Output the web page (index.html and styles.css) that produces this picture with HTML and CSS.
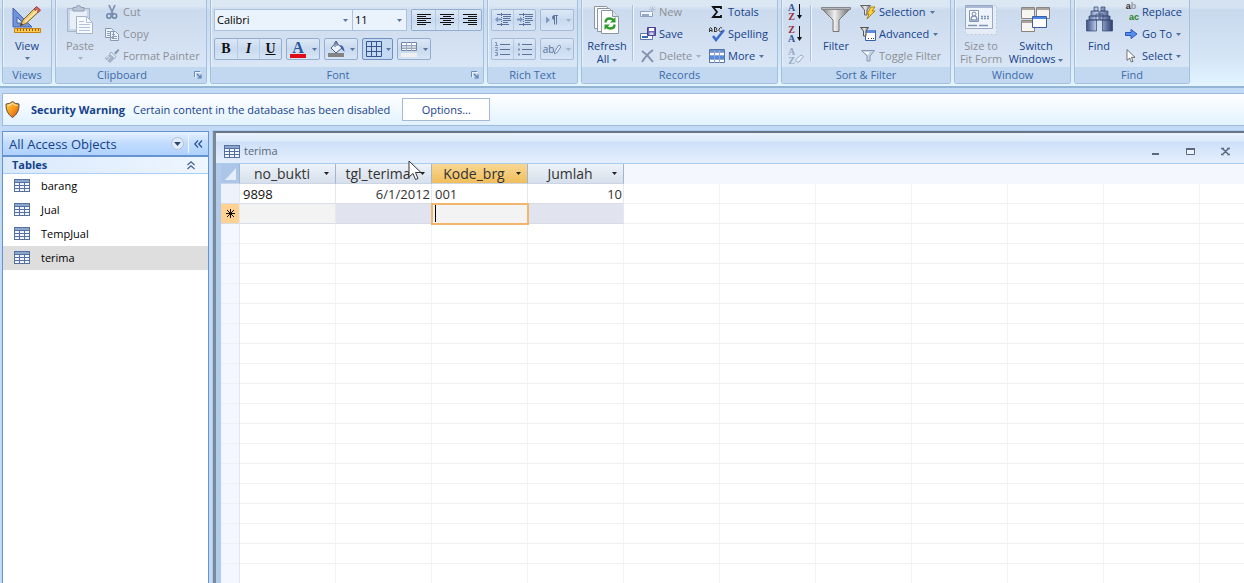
FILE: index.html
```html
<!DOCTYPE html>
<html lang="en">
<head>
<meta charset="utf-8">
<title>terima</title>
<link rel="stylesheet" href="styles.css">
</head>
<body>
<svg class="defs" aria-hidden="true">
  <defs>
    <linearGradient id="gFunnel" x1="0" x2="1"><stop offset="0" stop-color="#777"/><stop offset=".45" stop-color="#eee"/><stop offset="1" stop-color="#666"/></linearGradient>
    <linearGradient id="gShield" x1="0" y1="0" x2="1" y2="1"><stop offset="0" stop-color="#ffd24a"/><stop offset=".5" stop-color="#f99a1c"/><stop offset="1" stop-color="#d8500a"/></linearGradient>
    <linearGradient id="gBino" x1="0" x2="1"><stop offset="0" stop-color="#3c5186"/><stop offset=".4" stop-color="#c3d2f2"/><stop offset="1" stop-color="#2c3d70"/></linearGradient>
    <symbol id="caret" viewBox="0 0 5 3"><path d="M0 0h5L2.500 3z" fill="currentColor"/></symbol>
    <symbol id="table" viewBox="0 0 16 13"><path d="M0 0h16v13H0z" fill="#55709f"/><path d="M1 1h14v2H1z" fill="#8da6d0"/><path d="M1 4h4v2H1zM6 4h4v2H6zM11 4h4v2h-4zM1 7h4v2H1zM6 7h4v2H6zM11 7h4v2h-4zM1 10h4v2H1zM6 10h4v2H6zM11 10h4v2h-4z" fill="#f0f5ff"/></symbol>
    <symbol id="launch" viewBox="0 0 8 8"><path d="M.5 6V.5H6" fill="none" stroke="#6b8bb8"/><path d="M3 3l3 3M7 3.500V7H3.500" fill="none" stroke="#5878a8" stroke-width="1.200"/><path d="M1.500 7V1.500H7" fill="none" stroke="#fff" stroke-width=".7"/></symbol>
    <symbol id="pointer" viewBox="0 0 14 21"><path d="M1 1v16l4-3.500 2.500 6 2.500-1-2.500-6H13z" fill="#fff" stroke="#333"/></symbol>
  </defs>
</svg>

<header class="ribbon">
  <section class="group g-views">
    <div class="body">
      <button class="big"><svg width="30" height="28" viewBox="0 0 30 28"><path d="M1 2v19h19z" fill="#7394d8" stroke="#4465ad"/><path d="M5 11v6h6z" fill="#dce7fa" stroke="#4465ad"/><path d="M2.500 22.500h26v4h-26z" fill="#ffc94b" stroke="#c98416"/><path d="M5.500 23v2m3-2v2m3-2v2m3-2v2m3-2v2m3-2v2m3-2v2m3-2v2" stroke="#8b5a10"/><path d="M8 20l3-6L24 1l4 3.500L14 17.500z" fill="#f3c76b" stroke="#856432"/><path d="M22 3l2.500-2.500 4 3.500L26 6.500z" fill="#d9635c" stroke="#8e4542"/><path d="M13 16L25 4.500" stroke="#fff1b8" stroke-width="1.500"/><path d="M8 20l1.500-3 1.500 1.500z" fill="#333"/></svg><span>View</span><svg class="caret"><use href="#caret"/></svg></button>
    </div>
    <h2>Views</h2>
  </section>

  <section class="group g-clip">
    <div class="body">
      <button class="big" disabled><svg width="28" height="30" viewBox="0 0 28 30"><path d="M1.500 3.500h22v23h-22z" fill="#c9d6e8" stroke="#a5b3c9"/><path d="M4 6h17v18H4z" fill="#e8eff8"/><path d="M7 6V2.500h3Q10 .5 12.500.5T15 2.500h3V6z" fill="#b9c6d9" stroke="#8e9db5"/><path d="M10.500 11.500h10l6 6v11h-16z" fill="#f6f9fe" stroke="#a5b3c9"/><path d="M20.500 11.500v6h6M13 16.500h5m-5 3h11m-11 3h11m-11 3h11" fill="none" stroke="#b3c2d8"/></svg><span>Paste</span><svg class="caret"><use href="#caret"/></svg></button>
      <div class="stack">
        <button class="small" disabled><svg width="16" height="16" viewBox="0 0 16 16"><path d="M5 1l4 9M11 1L7 10" stroke="#7f92b3" stroke-width="1.800"/><circle cx="5" cy="12" r="2.200" fill="none" stroke="#6f84aa" stroke-width="1.500"/><circle cx="10.500" cy="12" r="2.200" fill="none" stroke="#6f84aa" stroke-width="1.500"/></svg>Cut</button>
        <button class="small" disabled><svg width="16" height="16" viewBox="0 0 16 16"><path d="M1.500 2.500h6l2 2v7h-8zM6.500 5.500h5l3 3v6h-8z" fill="#eef3fb" stroke="#8798b5"/><path d="M3 5.500h3m-3 2h3m-3 2h3M8 8.500h3m-3 2h5m-5 2h5" stroke="#8fa0bc"/></svg>Copy</button>
        <button class="small" disabled><svg width="16" height="16" viewBox="0 0 16 16"><path d="M10 5l4-4 1.500 1L12 6.500z" fill="#8798b5"/><path d="M7 4l5 4.500-1.500 2L5.500 6z" fill="#dfe7f2" stroke="#8798b5" stroke-width=".7"/><path d="M5.500 6.500l5 4L6 15 .5 10z" fill="#a2b1c9"/><path d="M2 10l3-2m-1.500 4l3-3" stroke="#e3eaf4"/></svg>Format Painter</button>
      </div>
    </div>
    <h2>Clipboard</h2>
    <button class="launcher" aria-label="Clipboard options"><svg width="8" height="8"><use href="#launch"/></svg></button>
  </section>

  <section class="group g-font">
    <div class="body">
      <div class="row">
        <div class="combos">
          <span class="combo name"><select aria-label="Font name"><option>Calibri</option></select><svg class="caret"><use href="#caret"/></svg></span>
          <span class="combo size"><select aria-label="Font size"><option>11</option></select><svg class="caret"><use href="#caret"/></svg></span>
        </div>
        <div class="seg aligns">
          <button aria-label="Align left"><svg width="14" height="12" viewBox="0 0 14 12"><path d="M0 .5h14M0 2.500h9M0 4.500h14M0 6.500h9M0 8.500h14M0 10.500h9" stroke="#111"/></svg></button>
          <button aria-label="Center"><svg width="14" height="12" viewBox="0 0 14 12"><path d="M0 .5h14M3 2.500h8M0 4.500h14M3 6.500h8M0 8.500h14M3 10.500h8" stroke="#111"/></svg></button>
          <button aria-label="Align right"><svg width="14" height="12" viewBox="0 0 14 12"><path d="M0 .5h14M5 2.500h9M0 4.500h14M5 6.500h9M0 8.500h14M5 10.500h9" stroke="#111"/></svg></button>
        </div>
      </div>
      <div class="row">
        <div class="seg styles"><button><b>B</b></button><button><i>I</i></button><button><u>U</u></button></div>
        <div class="seg split"><button aria-label="Font color"><span class="font-color">A</span></button><svg class="caret"><use href="#caret"/></svg></div>
        <div class="seg split"><button aria-label="Fill color"><svg width="17" height="16" viewBox="0 0 17 16"><path d="M0 12h16v4H0z" fill="#838383"/><path d="M8 1.500l6 5.500-6 5-5-5z" fill="#edf3fb" stroke="#47597f"/><path d="M7 6V1Q8-.5 9 1v4" fill="none" stroke="#47597f"/><path d="M12 4q4 0 4.500 7l-3-3z" fill="#4264ac"/></svg></button><svg class="caret"><use href="#caret"/></svg></div>
        <div class="seg split on"><button aria-label="Gridlines"><svg width="16" height="16" viewBox="0 0 16 16"><path d="M.5.5h15v15H.5zM5.500 0v16M10.500 0v16M0 5.500h16M0 10.500h16" fill="none" stroke="#365690"/></svg></button><svg class="caret"><use href="#caret"/></svg></div>
        <div class="seg split"><button aria-label="Alternate fill color"><svg width="16" height="16" viewBox="0 0 16 16"><path d="M.5 1.500h15v8H.5z" fill="#fff" stroke="#7084a5"/><path d="M1 4h14v3H1z" fill="#cbd3df"/><path d="M5.500 1v9M10.500 1v9M1 4.500h14M1 7.500h14" stroke="#9aa9c1"/><path d="M0 12h16v4H0z" fill="#f0f0f3"/></svg></button><svg class="caret"><use href="#caret"/></svg></div>
      </div>
    </div>
    <h2>Font</h2>
    <button class="launcher" aria-label="Font options"><svg width="8" height="8"><use href="#launch"/></svg></button>
  </section>

  <section class="group g-rich">
    <div class="body">
      <div class="row">
        <div class="seg"><button disabled aria-label="Decrease indent"><svg width="16" height="14" viewBox="0 0 16 14"><path d="M2 1.500h14M8 3.500h8M8 5.500h7M8 7.500h8M8 9.500h5M2 11.500h12" stroke="#5b729b"/><path d="M6.500 0v14" stroke="#5b729b" stroke-dasharray="1 1"/><path d="M0 6.500l3-3v2h3v2H3v2z" fill="#7f97c0"/></svg></button><button disabled aria-label="Increase indent"><svg width="16" height="14" viewBox="0 0 16 14"><path d="M2 1.500h14M8 3.500h8M8 5.500h7M8 7.500h8M8 9.500h5M2 11.500h12" stroke="#5b729b"/><path d="M6.500 0v14" stroke="#5b729b" stroke-dasharray="1 1"/><path d="M6 6.500l-3-3v2H0v2h3v2z" fill="#7f97c0"/></svg></button></div>
        <div class="seg split"><button disabled aria-label="Text direction"><svg width="13" height="10" viewBox="0 0 13 10"><path d="M0 1.500l4 3.500-4 3.500z" fill="#8099c2"/><path d="M12 .5H8.500a2 2 0 0 0 0 4V.5M8.500 0v9.500M10.500 0v9.500" stroke="#60779f" fill="#60779f"/></svg></button><svg class="caret dim"><use href="#caret"/></svg></div>
      </div>
      <div class="row">
        <div class="seg"><button disabled aria-label="Numbering"><svg width="16" height="14" viewBox="0 0 16 14"><path d="M5 2.500h10M5 7.500h10M5 12.500h10" stroke="#5b729b"/><path d="M0 .5h1.500v3M0 3.500h3M0 5.500h2.500v1L.5 8.500H3M0 10.500h2.500v3H0m1-1.500h1" fill="none" stroke="#8095b9"/></svg></button><button disabled aria-label="Bullets"><svg width="16" height="14" viewBox="0 0 16 14"><path d="M5 2.500h10M5 7.500h10M5 12.500h10" stroke="#5b729b"/><path d="M1 1.500h2v2H1zM1 6.500h2v2H1zM1 11.500h2v2H1z" fill="#8095b9"/></svg></button></div>
        <div class="seg split"><button disabled aria-label="Highlight"><span class="ab">ab</span><svg width="7" height="12" viewBox="0 0 7 12"><path d="M0 11l1-3 4-6 2 1.500-4 6z" fill="#eef3fa" stroke="#7389ae"/></svg></button><svg class="caret dim"><use href="#caret"/></svg></div>
      </div>
    </div>
    <h2>Rich Text</h2>
  </section>

  <section class="group g-rec">
    <div class="body">
      <button class="big"><svg width="28" height="30" viewBox="0 0 28 30"><path d="M1.500 1.500h12l4 4v18h-16z" fill="#f8fafc" stroke="#8c95a3"/><path d="M4.500 3.500h12l4 4v19h-16z" fill="#f8fafc" stroke="#8c95a3"/><path d="M8.500 5.500h11l6 6v17h-17z" fill="#fff" stroke="#8c95a3"/><path d="M19.500 5.500v6h6" fill="#dde2e9" stroke="#8c95a3"/><path d="M12.500 17.500q0-4 4-4 2.500 0 4 1.500M21.500 19.500q0 4-4 4-2.500 0-4-1.500" fill="none" stroke="#2f9a2c" stroke-width="2.400"/><path d="M22.500 12v5.500H17zM11.500 25v-5.500H17z" fill="#2f9a2c"/></svg><span>Refresh</span><span>All <svg class="caret"><use href="#caret"/></svg></span></button>
      <div class="rule"></div>
      <div class="stack c1">
        <button class="small" disabled><svg width="16" height="16" viewBox="0 0 16 16"><path d="M.5 7.500h12v5H.5z" fill="#f2f6fc" stroke="#8fa1bf"/><path d="M2 10h7v2H2z" fill="#93a8cb"/><path d="M12.500 2v7M9 5.500h7M10 3l5 5M15 3l-5 5" stroke="#b9c5d8"/></svg>New</button>
        <button class="small"><svg width="16" height="16" viewBox="0 0 16 16"><path d="M.5 7.500h12v6H.5z" fill="#fff" stroke="#5d79aa"/><path d="M2 10h6v2H2z" fill="#3567c7"/><path d="M7.500 1.500h8v8h-8z" fill="#6f68bd" stroke="#47408c"/><path d="M9 2h5v3H9z" fill="#fff"/><path d="M9.500 6.500h4V9h-4z" fill="#d3d1ef"/></svg>Save</button>
        <button class="small" disabled><svg width="16" height="16" viewBox="0 0 16 16"><path d="M2 3q6 4 11 11M13 2Q7 6 2 14" fill="none" stroke="#8292ac" stroke-width="2"/></svg>Delete <svg class="caret dim"><use href="#caret"/></svg></button>
      </div>
      <div class="stack c2">
        <button class="small"><svg width="16" height="16" viewBox="0 0 16 16"><path d="M12 5V3H4l4 5-4 5h8v-2" fill="none" stroke="#111" stroke-width="1.800"/></svg>Totals</button>
        <button class="small"><svg width="16" height="16" viewBox="0 0 16 16"><path d="M4 10l3 4L15 4" fill="none" stroke="#3d6bd0" stroke-width="2.500"/><path d="M.5 6V3l1-1.500L3 3v3M.5 4.500H3M5.500 1.500V6M5 1.500h2L8 3 7 3.500 8 4.500 7.500 5.500H5M13 2l-1.500-.5L10 3v1.500L11.500 6 13 5" fill="none" stroke="#333"/></svg>Spelling</button>
        <button class="small"><svg width="16" height="16" viewBox="0 0 16 16"><path d="M.5 1.500h15v13H.5z" fill="#fff" stroke="#5574aa"/><path d="M1 2h14v2H1z" fill="#6f91d2"/><path d="M1 7h14v4H1z" fill="#5989dd"/><path d="M5.500 2v13M10.500 2v13M1 4.500h14M1 7.500h14M1 11.500h14" stroke="#8da8d6"/></svg>More <svg class="caret"><use href="#caret"/></svg></button>
      </div>
    </div>
    <h2>Records</h2>
  </section>

  <section class="group g-sort">
    <div class="body">
      <div class="stack sorts">
        <button class="small sort" aria-label="Sort ascending"><span class="az"><span class="blue">A</span><span class="red">Z</span></span><svg width="5" height="16" viewBox="0 0 5 16"><path d="M2.500 0v12" stroke="#111"/><path d="M0 11h5l-2.500 4z" fill="#111"/></svg></button>
        <button class="small sort" aria-label="Sort descending"><span class="az"><span class="red">Z</span><span class="blue">A</span></span><svg width="5" height="16" viewBox="0 0 5 16"><path d="M2.500 0v12" stroke="#111"/><path d="M0 11h5l-2.500 4z" fill="#111"/></svg></button>
        <button class="small sort off" disabled aria-label="Clear sorts"><span class="az"><span>A</span><span>Z</span></span><svg width="9" height="16" viewBox="0 0 9 16"><path d="M.5 12L5 7.500q2-1 3.500 1L4 14q-3 1-3.500-2z" fill="#e8eef7" stroke="#9aabc4"/></svg></button>
      </div>
      <div class="rule"></div>
      <button class="big"><svg width="30" height="28" viewBox="0 0 30 28"><path d="M.5 2.500h29L18 14v11.500h-6V14z" fill="url(#gFunnel)" stroke="#777"/><path d="M.5 1.500h29v2H.5z" fill="#b5b7ba" stroke="#85878a"/></svg><span>Filter</span></button>
      <div class="stack">
        <button class="small"><svg width="16" height="16" viewBox="0 0 16 16"><path d="M.5 1.500h10L7 6v5H4.500V6z" fill="url(#gFunnel)" stroke="#666"/><path d="M11 3h4l-3 4h3l-8 8 2-5H7z" fill="#ffd438" stroke="#b08217"/></svg>Selection <svg class="caret"><use href="#caret"/></svg></button>
        <button class="small"><svg width="16" height="16" viewBox="0 0 16 16"><path d="M5.500 4.500h10v10h-10z" fill="#fff" stroke="#3b5fa4"/><path d="M6 4h9v3H6z" fill="#5d8bdd"/><path d="M8 12.500h1m2 0h1m1 0h1" stroke="#333"/><path d="M.5 1.500h8L6 5v5H3.500V5z" fill="url(#gFunnel)" stroke="#555"/></svg>Advanced <svg class="caret"><use href="#caret"/></svg></button>
        <button class="small" disabled><svg width="16" height="16" viewBox="0 0 16 16"><path d="M1.500 2.500h13L10 8v5H7V8z" fill="#c9d5e6" stroke="#8497b5"/><path d="M4 4h5L8 7z" fill="#fff"/></svg>Toggle Filter</button>
      </div>
    </div>
    <h2>Sort &amp; Filter</h2>
  </section>

  <section class="group g-win">
    <div class="body">
      <button class="big" disabled><svg width="32" height="30" viewBox="0 0 32 30"><path d="M.5.500h31v29H.5z" fill="#e6edf7" stroke="#bdc9db" stroke-dasharray="2 2"/><path d="M.5.500h27v23H.5z" fill="#eff4fa" stroke="#99a9c3"/><path d="M1 1h26v2H1z" fill="#a9b9d3"/><path d="M4.500 5.500h9v11h-9z" fill="#fff" stroke="#8094b7"/><circle cx="9" cy="9" r="2" fill="none" stroke="#7287ad"/><path d="M6 15q0-4 3-4t3 4zM16 11.500h2m1 0h2m1 0h2M16 13.500h2m1 0h2m1 0h2M3 20.500h9m2 0h9" fill="none" stroke="#8094b7" stroke-width="1.500"/></svg><span>Size to</span><span>Fit Form</span></button>
      <button class="big"><svg width="30" height="30" viewBox="0 0 30 30"><g fill="#f7f5f1" stroke="#8b8580"><path d="M.5 2.500h13v11H.5zM15.500 2.500h13v11h-13zM.5 15.500h13v11H.5z"/></g><path d="M1 3h12v2H1zM16 3h12v2H16zM1 16h12v2H1z" fill="#aaa49d"/><path d="M11.500 11.500h14v11h-14z" fill="#fff" stroke="#385da2"/><path d="M12 12h13v2H12z" fill="#4b86e8"/></svg><span>Switch</span><span>Windows <svg class="caret"><use href="#caret"/></svg></span></button>
    </div>
    <h2>Window</h2>
  </section>

  <section class="group g-find">
    <div class="body">
      <button class="big"><svg width="28" height="28" viewBox="0 0 28 28"><g fill="url(#gBino)" stroke="#33456f" stroke-width=".7"><path d="M9 1h4v4H9zM16 1h4v4h-4zM6 5h8v5H6zM15 5h8v5h-8zM4 10h10v4H4zM15 10h10v4H15zM11 8h7v6h-7zM1.500 14h10v11h-10zM17.500 14h10v11h-10z"/></g></svg><span>Find</span></button>
      <div class="stack">
        <button class="small"><span class="swap"><span>a<em>b</em></span><span class="ac">ac</span></span>Replace</button>
        <button class="small"><svg width="16" height="16" viewBox="0 0 16 16"><path d="M2.500 6.500H8v-3l6 4.500-6 4.500v-3H2.500z" fill="#5590f0" stroke="#2c57b5"/></svg>Go To <svg class="caret"><use href="#caret"/></svg></button>
        <button class="small"><svg width="16" height="14"><use href="#pointer"/></svg>Select <svg class="caret"><use href="#caret"/></svg></button>
      </div>
    </div>
    <h2>Find</h2>
  </section>
</header>

<div class="message" role="alert">
  <svg width="15" height="17" viewBox="0 0 15 17"><path d="M7.500.5Q10 3 14 3q.5 9-6.500 13.500Q.5 12 1 3 5 3 7.500.5z" fill="url(#gShield)" stroke="#5d5147"/><path d="M7.500 2.500Q10 4.500 12.500 4.500M2.500 4.500Q5 4.500 7.500 2.500" fill="none" stroke="#fff0c8"/></svg>
  <strong>Security Warning</strong>
  <span>Certain content in the database has been disabled</span>
  <button>Options...</button>
</div>

<div class="workspace">
  <nav class="pane">
    <div class="pane-head"><h1>All Access Objects</h1><button class="round" aria-label="Choose category"><svg width="7" height="4"><use href="#caret"/></svg></button><button class="fold" aria-label="Collapse pane"><svg width="9" height="8" viewBox="0 0 9 8"><path d="M4 .5L.8 4 4 7.500M8 .5L4.800 4 8 7.500" fill="none" stroke="#2c5490" stroke-width="1.200"/></svg></button></div>
    <button class="section"><span>Tables</span><svg width="8" height="9" viewBox="0 0 8 9"><path d="M.5 4L4 .8 7.500 4M.5 8L4 4.800 7.500 8" fill="none" stroke="#3f6190" stroke-width="1.200"/></svg></button>
    <ul>
      <li><a href="#barang"><svg width="16" height="13"><use href="#table"/></svg>barang</a></li>
      <li><a href="#jual"><svg width="16" height="13"><use href="#table"/></svg>Jual</a></li>
      <li><a href="#tempjual"><svg width="16" height="13"><use href="#table"/></svg>TempJual</a></li>
      <li><a class="current" href="#terima"><svg width="16" height="13"><use href="#table"/></svg>terima</a></li>
    </ul>
  </nav>
  <main class="doc">
    <div class="titlebar">
      <svg width="16" height="13"><use href="#table"/></svg><span class="title">terima</span>
      <button aria-label="Minimize"><svg width="9" height="9" viewBox="0 0 9 9"><path d="M1 6h7v2H1z" fill="#5b6880"/></svg></button>
      <button aria-label="Maximize"><svg width="9" height="9" viewBox="0 0 9 9"><path d="M.5 1.500h8v6h-8z" fill="#eef4fd" stroke="#5b6880"/><path d="M0 1h9v2H0z" fill="#5b6880"/></svg></button>
      <button aria-label="Close"><svg width="9" height="9" viewBox="0 0 9 9"><path d="M0 1.500h3M6 1.500h3M0 7.500h3M6 7.500h3M1.500 1.500l6 6M7.500 1.500l-6 6" fill="none" stroke="#5b6880" stroke-width="1.500"/></svg></button>
    </div>
    <div class="sheet">
      <table>
        <thead><tr>
          <th class="corner"><svg width="11" height="12" viewBox="0 0 11 12"><path d="M11 0v12H0z" fill="#e4edf8"/></svg></th>
          <th><div><span>no_bukti</span><svg class="caret"><use href="#caret"/></svg></div></th>
          <th><div><span>tgl_terima</span><svg class="caret"><use href="#caret"/></svg></div></th>
          <th class="hot"><div><span>Kode_brg</span><svg class="caret"><use href="#caret"/></svg></div></th>
          <th><div><span>Jumlah</span><svg class="caret"><use href="#caret"/></svg></div></th>
        </tr></thead>
        <tbody>
          <tr><td class="sel"></td><td class="strong">9898</td><td class="num">6/1/2012</td><td>001</td><td class="num">10</td></tr>
          <tr class="new"><td class="sel"><svg width="9" height="9" viewBox="0 0 9 9"><path d="M4.500 0v9M0 4.500h9M1 1l7 7M8 1L1 8" stroke="#111"/></svg></td><td class="plain"></td><td></td><td class="edit"><input aria-label="Kode_brg"><i class="beam"></i></td><td></td></tr>
        </tbody>
      </table>
    </div>
    <svg class="mouse" width="14" height="21"><use href="#pointer"/></svg>
  </main>
</div>
</body>
</html>
```
FILE: styles.css
```css
* { box-sizing: border-box; }
html, body { height: 100%; }
body {
  margin: 0;
  display: flex;
  flex-direction: column;
  overflow: hidden;
  background: #c3daf6;
  color: #15428b;
  font: 11px/16px "Open Sans", "Noto Sans", sans-serif;
}
button {
  padding: 0;
  border: 0;
  background: none;
  color: inherit;
  font: inherit;
}
button:disabled { color: #8d8f94; }
svg { flex: none; }
.defs { position: absolute; width: 0; height: 0; }
.caret { width: 5px; height: 3px; color: #56749f; vertical-align: middle; }
.caret.dim, button:disabled .caret { color: #a3afc2; }

/* Ribbon */
.ribbon {
  flex: none;
  display: flex;
  gap: 3px;
  height: 88px;
  padding: 0 2px 2px;
  background: linear-gradient(#d5e2f2 0, #d5e2f2 8px, #c8d9ed 10px, #d5e6f7 60px, #e3f5ff 100%);
  border-bottom: 2px solid #94b4d6;
}
.group {
  position: relative;
  flex: none;
  display: flex;
  flex-direction: column;
  border: 1px solid #a3c0df;
  border-top: 0;
  border-radius: 0 0 3px 3px;
  background: linear-gradient(#dce7f4 0, #dce7f4 6px, #cbdaed 10px, #d9e6f6 68px);
  box-shadow: inset 1px 0 #e7f0fa;
  overflow: hidden;
}
.group .body { flex: 1 1 0; min-height: 0; display: flex; padding-top: 1px; }
.group h2 {
  flex: none;
  height: 16px;
  margin: 0;
  background: #c1d8f0;
  color: #3e6aaa;
  font-size: 11px;
  font-weight: 400;
  text-align: center;
}
.g-views { width: 50px; }
.g-clip { width: 152px; }
.g-font { width: 274px; }
.g-rich { width: 91px; }
.g-rec { width: 197px; }
.g-sort { width: 170px; }
.g-win { width: 117px; }
.g-find { width: 116px; }
.g-clip h2, .g-font h2 { padding-right: 18px; }
.launcher { position: absolute; right: 4px; bottom: 4px; width: 9px; height: 9px; line-height: 0; }

.big {
  display: flex;
  flex-direction: column;
  align-items: center;
  justify-content: flex-start;
  height: 66px;
  padding-top: 4px;
  line-height: 13px;
}
.big > svg:first-child { height: 30px; margin-bottom: 4px; }
.big > .caret { margin-top: 5px; }
.big span { white-space: nowrap; }
.stack { display: flex; flex-direction: column; }
.small { display: flex; align-items: center; gap: 3px; height: 22px; white-space: nowrap; }
.small .caret { margin-left: 1px; }
.rule { width: 2px; height: 56px; margin-top: 4px; border-left: 1px solid #a9bfdb; background: #eef5fc; }

.g-views .big { width: 100%; }
.g-clip .big { width: 48px; }
.g-rec .big { width: 50px; }
.g-rec .c1 { width: 69px; padding-left: 6px; }
.g-rec .c2 { padding-left: 6px; }
.g-sort .sorts { width: 28px; padding-left: 6px; }
.g-sort .big { width: 48px; }
.g-win .big { width: 52px; }
.g-win .big + .big { width: 58px; }
.g-find .big { width: 48px; }

.g-font .body, .g-rich .body { flex-direction: column; gap: 7px; padding: 9px 3px 0; }
.row { display: flex; gap: 4px; }
.combos { display: flex; }
.combo { position: relative; height: 22px; border: 1px solid #abc1de; background: #eaf2fb; }
.combo + .combo { border-left: 0; }
.combo.name { width: 139px; }
.combo.size { width: 54px; }
.combo select {
  width: 100%;
  height: 20px;
  padding: 0 2px;
  border: 0;
  appearance: none;
  background: none;
  color: #000;
  font: inherit;
}
.combo .caret { position: absolute; right: 4px; top: 9px; pointer-events: none; }
.seg {
  display: flex;
  align-items: center;
  height: 22px;
  border: 1px solid #93add1;
  border-radius: 2px;
  background: linear-gradient(#dce8f6, #c9daef 50%, #d7e5f6);
}
.seg button { width: 22px; height: 20px; display: flex; align-items: center; justify-content: center; }
.seg button + button { border-left: 1px solid #b7cae4; }
.seg.aligns button { width: 23px; }
.styles button { color: #111; font: 700 14px/20px "Liberation Serif", serif; }
.split { width: 34px; gap: 3px; }
.split.on { width: 31px; gap: 1px; background: #c6d9f3; border-color: #6f8fc0; }
.font-color { width: 16px; height: 17px; border-bottom: 4px solid #e00b14; color: #28569d; font: 700 16px/13px "Liberation Serif", serif; text-align: center; }
.ab { color: #5b729b; font-size: 10px; }
.g-rich .seg { border-color: #a5bbd9; }
.g-rich .seg:first-child { width: 45px; }

.az { display: flex; flex-direction: column; font: 700 10px/9px "Liberation Serif", serif; color: #98a9c4; }
.az .blue { color: #35559b; }
.az .red { color: #9b2c3c; }
.sort { gap: 2px; }
.sort.off { gap: 0; }
.swap { display: flex; flex-direction: column; width: 16px; color: #333; font: 700 9px/11px "Liberation Sans", sans-serif; }
.swap em { color: #999; font-style: normal; }
.swap .ac { padding-left: 6px; color: #238325; }

/* Message bar */
.message {
  flex: none;
  display: flex;
  align-items: center;
  height: 33px;
  margin: 5px 0 5px 2px;
  padding-left: 2px;
  border: 1px solid #9ebbdd;
  border-right: 0;
  background: linear-gradient(#fff, #e2f2ff);
}
.message strong { margin: 0 8px 0 11px; }
.message button { width: 88px; height: 23px; margin-left: 12px; border: 1px solid #a3bad6; background: #fff; }

/* Navigation pane */
.workspace { flex: 1; min-height: 0; display: flex; }
.pane {
  flex: none;
  width: 207px;
  margin-left: 2px;
  border: 1px solid #6593cf;
  border-bottom: 0;
  background: #fff;
}
.pane-head {
  display: flex;
  align-items: center;
  height: 25px;
  padding-left: 6px;
  border-bottom: 2px solid #6593cf;
  background: linear-gradient(#e6f1ff, #c0dbfd 50%, #b0d2ff);
}
.pane-head h1 { flex: 1; margin: 0; font-size: 13px; font-weight: 400; }
.round { display: flex; align-items: center; justify-content: center; width: 13px; height: 13px; border: 1px solid #b3bfd0; border-radius: 50%; background: #dfeafa; color: #26456f; }
.fold { display: flex; align-items: center; justify-content: center; width: 20px; height: 19px; margin-left: 4px; border-left: 1px solid #f3f9ff; }
.section {
  display: flex;
  align-items: center;
  justify-content: space-between;
  width: 100%;
  height: 17px;
  padding: 0 13px 0 9px;
  border-bottom: 1px solid #a9cdf3;
  background: linear-gradient(90deg, #d9e9fc, #eef6ff);
  font-weight: 700;
}
.pane ul { margin: 0; padding: 0; list-style: none; }
.pane a { display: flex; align-items: center; gap: 11px; height: 24px; padding-left: 11px; color: #000; text-decoration: none; }
.pane a.current { background: #dedede; }
.pane a svg { margin-bottom: 2px; }

/* Document window */
.doc {
  position: relative;
  flex: 1;
  min-width: 0;
  display: flex;
  flex-direction: column;
  margin-left: 4px;
  border: solid #6a7480;
  border-width: 2px 0 0 3px;
  border-left-color: #7d8895;
  outline: 1px solid #a8cdf8;
  background: #b0cbec;
}
.titlebar {
  flex: none;
  display: flex;
  align-items: center;
  height: 31px;
  padding: 6px 11px 0 8px;
  border-bottom: 1px solid #a9cbf0;
  background: linear-gradient(#eaf2fc 0, #dfebfb 8px, #cee0f8 9px, #e4effd 100%);
  color: #5d6779;
}
.title { flex: 1; margin-left: 4px; }
.titlebar button { display: flex; width: 17px; height: 17px; align-items: center; justify-content: center; margin-left: 18px; }
.titlebar button:last-child { margin-right: -1px; }
.sheet {
  flex: 1;
  min-height: 0;
  margin-left: 5px;
  background:
    linear-gradient(90deg, #e3e5f0 1px, transparent 1px) 18px 0 / 100% 100% no-repeat,
    linear-gradient(#f5f7fe, #f5f7fe) 0 0 / 100% 20px no-repeat,
    repeating-linear-gradient(transparent 0 19px, #eff0f4 19px 20px),
    linear-gradient(90deg, #f5f7fe 18px, transparent 18px),
    repeating-linear-gradient(90deg, #f3f3f6 0 1px, transparent 1px 96px) 18px 0,
    #fff;
}
table { table-layout: fixed; width: 403px; border-collapse: separate; border-spacing: 0; color: #333; font-size: 13px; line-height: 18px; }
th, td { width: 96px; height: 20px; padding: 0; border-right: 1px solid #e5e8ef; border-bottom: 1px solid #d8dce5; font-weight: 400; }
th { border-right-color: #a0b7d0; border-bottom-color: #cbd5e3; background: linear-gradient(#eef3f9, #d6dfeb); font-size: 14px; }
th div { display: flex; align-items: center; padding-right: 6px; }
th span { flex: 1; text-align: center; }
th .caret { color: #222; }
th.hot { background: linear-gradient(#f8d794, #f1be5b); }
th.corner { width: 19px; background: #abc6e8; text-align: right; line-height: 0; padding-right: 3px; }
td { background: #fff; padding: 1px 2px 0 3px; }
.num { padding-right: 1px; text-align: right; }
td.strong { color: #111; }
td.sel { padding: 0; background: #edf2fb; text-align: center; line-height: 0; }
.new td { background: #e1e4ee; }
.new td.plain { background: #f3f3f3; }
.new td.sel { background: #ffd291; }
.new td.edit { position: relative; padding: 0; background: #f3f3f3; outline: 2px solid #f2b56b; outline-offset: -1px; }
.edit input { display: block; width: 100%; height: 18px; padding: 0 3px; border: 0; outline: 0; background: none; font: inherit; }
.beam { position: absolute; left: 3px; top: 1px; width: 1px; height: 17px; background: #000; }
.mouse { position: absolute; left: 192px; top: 27px; }
```
